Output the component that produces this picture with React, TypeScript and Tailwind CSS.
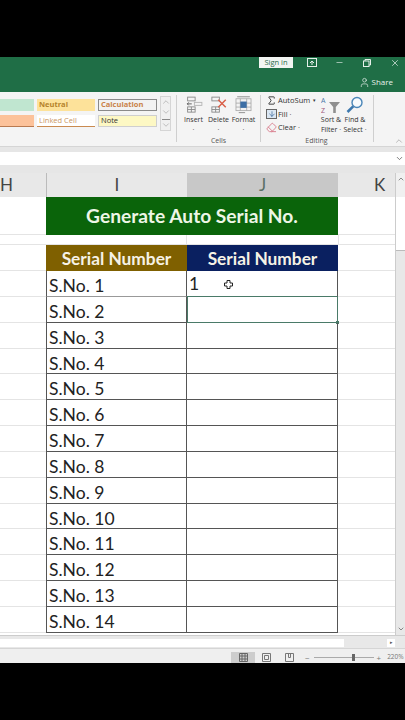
import React from 'react';
import { Sigma, X, Minus, User, ChevronUp, ChevronDown, Eraser, ArrowDown } from 'lucide-react';

const snos = Array.from({ length: 14 }, (_, i) => `S.No. ${i + 1}`);

const InsertIcon = () => (
  <svg width="20" height="18" viewBox="0 0 26 24" fill="none" stroke="#8a8a8a" strokeWidth="1.2">
    <rect x="4.5" y="1.5" width="10" height="5" />
    <rect x="4.5" y="14.5" width="10" height="7" />
    <path d="M9.5 14.5v7M4.5 18h10" />
    <rect x="13.5" y="8.5" width="10" height="4" stroke="#b5b5b5" />
    <path d="M10 10.5H4M6 8.5l-2 2 2 2" stroke="#555" />
  </svg>
);

const DeleteIcon = () => (
  <svg width="20" height="18" viewBox="0 0 26 24" fill="none" stroke="#8a8a8a" strokeWidth="1.2">
    <rect x="3.5" y="1.5" width="10" height="5" />
    <rect x="3.5" y="14.5" width="10" height="7" />
    <path d="M8.5 14.5v7M3.5 18h10" />
    <path d="M12 5l10 10M22 5L12 15" stroke="#d9614a" strokeWidth="2" />
  </svg>
);

const FormatIcon = () => (
  <svg width="19" height="19" viewBox="0 0 24 24" fill="none" stroke="#a5a5a5" strokeWidth="1">
    <rect x="2.5" y="3.5" width="19" height="15" />
    <path d="M8 3.5v15M16 3.5v15M2.5 9h19M2.5 14h19" />
    <rect x="8" y="7" width="8" height="8" fill="#3d6fa5" stroke="none" />
    <path d="M4 1h16M6 21h8" stroke="#777" />
  </svg>
);

const SortIcon = () => (
  <svg width="20" height="18" viewBox="0 0 20 18" fill="none">
    <text x="0" y="7" fontSize="7" fontFamily="Open Sans, sans-serif" fill="#4a78a8">A</text>
    <text x="0" y="17" fontSize="7" fontFamily="Open Sans, sans-serif" fill="#a05a7a">Z</text>
    <path d="M8 6h11l-4.2 5v6h-2.6v-6z" fill="#8f8f8f" />
  </svg>
);

const FindIcon = () => (
  <svg width="18" height="18" viewBox="0 0 18 18" fill="none">
    <circle cx="11" cy="6.5" r="5" stroke="#4a86b8" strokeWidth="1.4" fill="#f8fbfd" />
    <path d="M7.2 10.3L1.5 16" stroke="#3d78ad" strokeWidth="2.6" />
  </svg>
);

const Style = ({ label, className }: { label: string; className: string }) => (
  <div className={`flex h-[12px] items-center px-[2px] text-[7.5px] font-bold ${className}`}>{label}</div>
);

const RibbonBtn = ({ icon, lines }: { icon: React.ReactNode; lines: string[] }) => (
  <div className="flex w-[25px] flex-col items-center text-[7px] leading-[10px] text-[#333]">
    <div className="flex h-[20px] items-center">{icon}</div>
    {lines.map(l => <span key={l} className="whitespace-nowrap">{l}</span>)}
  </div>
);

const App: React.FC = () => {
  return (
    <div className="flex h-[720px] w-[405px] flex-col overflow-hidden bg-black font-['Open_Sans',sans-serif]">
      <div className="h-[57px] shrink-0 bg-black" />

      {/* title bar */}
      <div className="h-[35px] shrink-0 bg-[#1f6e46] text-white">
        <div className="flex h-[11px] items-center">
          <div className="ml-[259px] flex h-[11px] w-[34px] items-center justify-center bg-[#f2f5f2] text-[7.5px] text-[#2b6b4a]">Sign in</div>
          <svg className="ml-[14px]" width="10" height="9" viewBox="0 0 10 9" fill="none" stroke="#e6f0ea"><rect x="0.5" y="0.5" width="9" height="8" /><path d="M5 7V3M3 5l2-2 2 2" /></svg>
          <Minus className="ml-[18px]" size={9} strokeWidth={1.5} />
          <svg className="ml-[19px]" width="8" height="8" viewBox="0 0 8 8" fill="none" stroke="#e6f0ea"><rect x="0.5" y="2" width="5.5" height="5.5" /><path d="M2 2V.5h5.5V6H6" /></svg>
          <X className="ml-[19px]" size={10} strokeWidth={1.5} />
        </div>
        <div className="mt-[8px] flex items-center justify-end gap-[2px] pr-[12px] text-[8px] text-[#e8f1ec]">
          <User size={11} strokeWidth={1.5} />
          <span>Share</span>
        </div>
      </div>

      {/* ribbon */}
      <div className="relative flex h-[55px] shrink-0 items-start border-b border-[#d5d5d5] bg-[#f4f4f4] pt-[7px]">
        <div className="grid w-[158px] grid-cols-[34px_58px_59px] gap-x-[3px] gap-y-[4px]">
          <div className="h-[12px] bg-[#c0e6d0]" />
          <Style label="Neutral" className="bg-[#fde29a] text-[#b5822a]" />
          <Style label="Calculation" className="border border-[#8a8a8a] bg-[#f2f2f2] text-[#c98148]" />
          <div className="h-[12px] border-b border-[#b97a50] bg-[#fcc29a]" />
          <Style label="Linked Cell" className="border-b border-[#c98a50] bg-white font-normal text-[#c9965f]" />
          <Style label="Note" className="border border-[#cfcfcf] bg-[#fdf8c4] font-normal text-[#333]" />
        </div>
        <div className="-mt-[3px] ml-[2px] flex w-[11px] flex-col border border-[#d5d5d5] bg-[#f0f0f0] text-[#777]">
          <ChevronUp size={10} strokeWidth={1} />
          <ChevronDown size={10} strokeWidth={1} />
          <div className="flex h-[13px] flex-col items-center justify-end">
            <div className="h-px w-[8px] bg-[#888]" />
            <ChevronDown size={10} strokeWidth={1} />
          </div>
        </div>
        <div className="-mt-[4px] ml-[5px] h-[47px] w-px bg-[#cfcfcf]" />
        <div className="-mt-[4px] flex flex-col">
          <div className="ml-[4px] flex">
            <RibbonBtn icon={<InsertIcon />} lines={['Insert', '·']} />
            <RibbonBtn icon={<DeleteIcon />} lines={['Delete', '·']} />
            <RibbonBtn icon={<FormatIcon />} lines={['Format', '·']} />
          </div>
          <div className="ml-[4px] mt-[1px] text-center text-[7px] leading-[9px] text-[#555]">Cells</div>
        </div>
        <div className="-mt-[4px] ml-[4px] h-[47px] w-px bg-[#cfcfcf]" />
        <div className="-mt-[4px] ml-[5px] flex flex-col">
          <div className="flex">
            <div className="flex w-[53px] flex-col gap-[2.5px] text-[7.5px] leading-[11px] text-[#333]">
              <div className="flex items-center gap-[1px] whitespace-nowrap"><Sigma size={11} strokeWidth={2} className="shrink-0" />AutoSum <span className="ml-[2px] text-[5px]">▾</span></div>
              <div className="flex items-center gap-[1px]"><span className="flex h-[10px] w-[11px] items-center justify-center border border-[#666] bg-[#dbe7f3]"><ArrowDown size={8} className="text-[#2d5f96]" /></span>Fill ·</div>
              <div className="flex items-center gap-[1px]"><Eraser size={11} className="text-[#d87a8a]" />Clear ·</div>
            </div>
            <div className="flex w-[24px] flex-col items-center text-[7px] leading-[9.5px] text-[#333]">
              <div className="flex h-[20px] items-center"><SortIcon /></div>
              <span className="whitespace-nowrap">Sort &amp;</span>
              <span className="whitespace-nowrap">Filter ·</span>
            </div>
            <div className="flex w-[24px] flex-col items-center text-[7px] leading-[9.5px] text-[#333]">
              <div className="flex h-[20px] items-center"><FindIcon /></div>
              <span className="whitespace-nowrap">Find &amp;</span>
              <span className="whitespace-nowrap">Select ·</span>
            </div>
          </div>
          <div className="mt-[2px] text-center text-[7px] leading-[9px] text-[#555]">Editing</div>
        </div>
        <div className="-mt-[4px] ml-[6px] h-[47px] w-px bg-[#cfcfcf]" />
        <ChevronUp size={10} strokeWidth={1} className="absolute right-[1px] top-[44px] text-[#666]" />
      </div>

      {/* formula bar */}
      <div className="flex h-[26px] shrink-0 flex-col bg-[#e6e6e6] pt-[5px]">
        <div className="flex h-[13px] items-center justify-end bg-white pr-[1px]">
          <ChevronDown size={9} className="text-[#555]" />
        </div>
      </div>

      {/* column headers */}
      <div className="grid h-[24px] shrink-0 grid-cols-[46px_141px_151px_57px_10px] bg-[#e8e8e8] font-['Lato',sans-serif] text-[17px] leading-[24px] text-[#444]">
        <div className="pr-[36px] text-right">H</div>
        <div className="border-l border-[#bbb] text-center">I</div>
        <div className="bg-[#c8c8c8] text-center text-[#5a6f66]">J</div>
        <div className="pl-[36px]">K</div>
        <div className="flex justify-center border-l border-[#ccc] bg-[#f0f0f0] pt-[2px]"><ChevronUp size={8} className="text-[#555]" /></div>
      </div>

      {/* sheet */}
      <div className="flex h-[438px] shrink-0 bg-white font-['Lato',sans-serif]">
        <div className="flex w-[395px] flex-col">
          <div className="grid h-[38px] shrink-0 grid-cols-[46px_292px_57px]">
            <div className="border-b border-[#e4e4e4]" />
            <div className="flex items-center justify-center bg-[#0a640a] pt-[1px] text-[19.2px] font-bold text-[#eef6e6]">Generate Auto Serial No.</div>
            <div className="border-b border-[#e4e4e4]" />
          </div>
          <div className="grid h-[10px] shrink-0 grid-cols-[46px_141px_151px_57px] border-b border-[#e4e4e4]">
            <div /><div className="border-r border-[#e4e4e4]" /><div /><div className="border-l border-[#e4e4e4]" />
          </div>
          <div className="grid h-[26px] min-h-0 shrink-0 grid-cols-[46px_141px_151px_57px] grid-rows-[26px] text-[17.3px] font-bold leading-[28px] text-[#f6f2e6]">
            <div className="border-b border-[#e4e4e4]" />
            <div className="bg-[#7f6000] text-center">Serial Number</div>
            <div className="bg-[#0a2060] text-center">Serial Number</div>
            <div className="border-b border-[#e4e4e4]" />
          </div>
          {snos.map((s, i) => (
            <div key={s} className="grid h-[25.85px] min-h-0 shrink-0 grid-cols-[46px_141px_151px_57px] grid-rows-[25.85px] text-[17.5px] leading-[26px] text-[#222]">
              <div className="border-b border-[#e4e4e4]" />
              <div className={`border-x border-b border-x-[#555] pl-[2px] pt-[2px] ${i === 0 ? 'border-b-[#999]' : 'border-b-[#555]'}`}>{s}</div>
              <div className={`relative border-b border-r pl-[2px] ${i === 1 ? 'border-l border-[#4a7a68]' : i === 0 ? 'border-r-[#555] border-b-[#4a7a68]' : 'border-[#555]'}`}>
                {i === 0 && (
                  <div className="flex h-full items-center pt-[2px]">
                    <span>1</span>
                    <svg className="ml-[25px]" width="9" height="9" viewBox="0 0 9 9" fill="#fff" stroke="#222"><path d="M3 .5h3V3h2.5v3H6v2.5H3V6H.5V3H3z" /></svg>
                  </div>
                )}
                {i === 1 && <div className="absolute -bottom-[2px] -right-[2px] h-[3px] w-[3px] bg-[#4a7a68]" />}
              </div>
              <div className="border-b border-[#e4e4e4]" />
            </div>
          ))}
        </div>
        <div className="flex w-[10px] flex-col border-l border-[#ccc] bg-[#e8e8e8]">
          <div className="h-[54px] border-b border-[#bbb] bg-white" />
          <div className="flex-1" />
          <div className="flex h-[10px] justify-center"><ChevronDown size={8} className="text-[#555]" /></div>
        </div>
      </div>

      {/* horizontal scroll */}
      <div className="flex h-[13px] shrink-0 items-end border-t border-[#ccc] bg-[#e8e8e8] pb-px">
        <div className="h-[8px] w-[344px] bg-white" />
        <div className="flex-1" />
        <div className="mr-[10px] flex h-[8px] w-[8px] items-center justify-center bg-white text-[5px] text-[#555]">▸</div>
      </div>

      {/* status bar */}
      <div className="flex h-[15px] shrink-0 items-end border-t border-[#d5d5d5] bg-[#efefef] pl-[231px] text-[#777]">
        <div className="flex h-[11px] w-[24px] items-center justify-center bg-[#cdcdcd]">
          <svg width="9" height="9" viewBox="0 0 9 9" fill="none" stroke="#666"><path d="M.5.5h8v8h-8zM.5 3h8M.5 6h8M3 .5v8M6 .5v8" /></svg>
        </div>
        <div className="flex h-[11px] items-center">
          <svg className="ml-[7px]" width="9" height="9" viewBox="0 0 9 9" fill="none" stroke="#777"><path d="M.5.5h8v8h-8z" /><path d="M2.5 2.5h4v4h-4z" /></svg>
          <svg className="ml-[14px]" width="9" height="9" viewBox="0 0 9 9" fill="none" stroke="#777"><path d="M.5.5h8v8h-8zM3.5.5v4h2v-4" /></svg>
          <span className="ml-[11px] text-[8px] leading-none">−</span>
          <div className="relative ml-[4px] h-px w-[60px] bg-[#aaa]">
            <div className="absolute -top-[3px] left-[38px] h-[7px] w-[3px] bg-[#666]" />
          </div>
          <span className="ml-[3px] text-[8px] leading-none">+</span>
          <span className="ml-[6px] text-[6.5px] leading-none">220%</span>
        </div>
      </div>

      <div className="flex-1 bg-black" />
    </div>
  );
};

export default App;
